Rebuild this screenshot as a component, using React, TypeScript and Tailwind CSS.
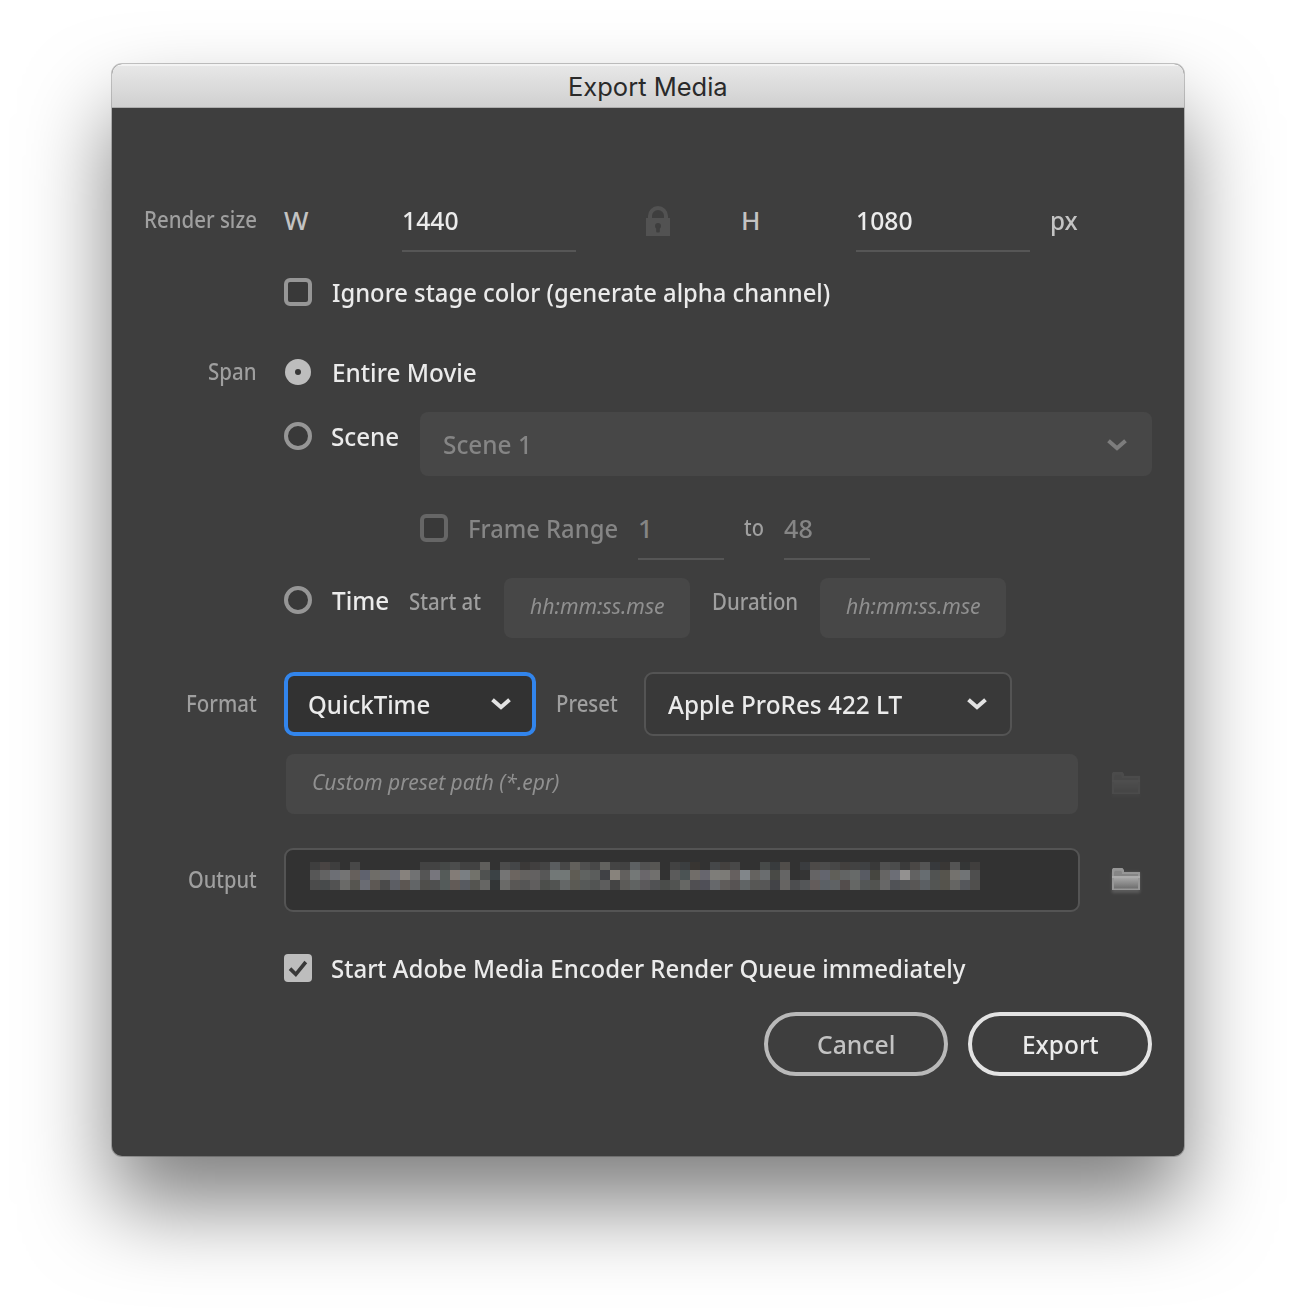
import { useLayoutEffect, useRef } from "react";
import type { ReactNode } from "react";
import clsx from "clsx";

/** One line of text, condensed or stretched horizontally to fill its box. */
function Line({ children, className }: { children: ReactNode; className: string }) {
  const box = useRef<HTMLSpanElement>(null);
  const ink = useRef<HTMLSpanElement>(null);
  useLayoutEffect(() => {
    if (!box.current || !ink.current) return;
    const ratio = box.current.clientWidth / ink.current.offsetWidth;
    ink.current.style.transform = `scaleX(${ratio})`;
  }, []);
  return (
    <span ref={box} className={clsx("block h-8 shrink-0 leading-8 whitespace-nowrap", className)}>
      <span ref={ink} className="inline-block origin-left">
        {children}
      </span>
    </span>
  );
}

const main = "text-[26px] font-medium text-[#ebebeb]";
const label = "text-[23px] font-medium text-[#9f9f9f]";
const hint = "text-[22px] italic text-[#909090]";
const unit = "text-[26px] font-medium text-[#c3c3c3]";
const muted = "text-[26px] font-medium text-[#858585]";

function Row({ className, children }: { className: string; children: ReactNode }) {
  return <div className={clsx("flex items-start", className)}>{children}</div>;
}

function LabelCell({ className, children }: { className?: string; children?: ReactNode }) {
  return <div className={clsx("flex w-[145px] shrink-0 justify-end", className)}>{children}</div>;
}

function Chevron({ className }: { className: string }) {
  return (
    <svg viewBox="0 0 20 12" fill="none" stroke="currentColor" strokeWidth="4" className={clsx("h-3 w-5 shrink-0", className)}>
      <path d="M1.5 1.7 10 9.2l8.500-7.5" />
    </svg>
  );
}

function Lock() {
  return (
    <svg viewBox="0 0 24 30" className="mt-1.5 ml-[70px] h-[30px] w-6 shrink-0">
      <path d="M4 13v-3a8 8 0 0 1 16 0v3" fill="none" stroke="#525252" strokeWidth="4" />
      <path d="M0 12h24v18H0z" fill="#525252" />
      <circle cx="12" cy="20" r="3" fill="#3e3e3e" />
      <path d="M10.200 20h3.600v5.500a1 1 0 0 1-1 1h-1.600a1 1 0 0 1-1-1z" fill="#3e3e3e" />
    </svg>
  );
}

function Folder({ id, className }: { id: string; className: string }) {
  return (
    <svg viewBox="0 0 36 36" className={clsx("h-9 w-9 shrink-0", className)}>
      <defs>
        <linearGradient id={id} x1="0" y1="0" x2="0" y2="1">
          <stop offset="0" stopColor="#a6a6a6" />
          <stop offset="1" stopColor="#6e6e6e" />
        </linearGradient>
        <filter id={id + "-glow"} x="-30%" y="-30%" width="160%" height="180%">
          <feGaussianBlur stdDeviation="1.800" />
        </filter>
      </defs>
      <path d="M4 8h28v21H4z" fill="#777" opacity=".5" filter={`url(#${id}-glow)`} />
      <path d="M4 5.500 5 4h9.500L16 6v2h16v18H4z" fill="#979797" />
      <path d="M6 8.200 7 6.800h6l1 1.400v2H6z" fill="#868686" />
      <path d="M6 10h24v2H6z" fill="#858585" />
      <path d="M4 12h28v2H4z" fill="#acacac" />
      <path d="M6 14h24v10.500H6z" fill={`url(#${id})`} />
    </svg>
  );
}

function Check({ className }: { className: string }) {
  return <div className={clsx("h-7 w-7 shrink-0 rounded-[6px] border-4 bg-[#393939]", className)} />;
}

function Radio({ className }: { className: string }) {
  return <div className={clsx("h-7 w-7 shrink-0 rounded-full border-4 border-[#969696] bg-[#393939]", className)} />;
}

const strips = [
  {
    y: 0,
    h: 8,
    cells:
      "3e3e3e 494443 3e3e3e . 484848 . . . . . . 434343 434343 454847 4c4d4d 424242 424242 5f5e5c . 4c4c4c 444648 3b3938 413f3f 444444 5a5d5f 484848 62605c 505050 484848 62625f 444444 424242 5d6062 525252 575653 . 424242 3b3e40 383532 . 454749 44413f 484848 . . 474a49 383b3d 504d4a . 3a3c3f 4d4a48 4c4c4c 474747 43403e 424242 3f4143 393939 505050 4b4c4c 3b3b3b 4a4745 545454 37393c 393735 545454 343636 403e3d",
  },
  {
    y: 8,
    h: 10,
    cells:
      "575757 636363 6d6f75 747474 66605c 5f626e 6f6d68 6e6e6e 6b6d75 87827d 717273 555555 77767d 555b59 837c77 7a7f83 72726b 4f5150 3b4245 757575 6c6560 646260 636161 575757 727877 727877 5f5c54 606361 5b5d5c 404145 88837c 62605e 747877 6a676b 71706e . 5b5b5b 4b5354 716d69 67666e 7e7d79 7c7b77 66605f 81868a 656360 6a6d6f 494a46 656565 . 343434 656465 63656e 605f59 626464 676a69 585b63 464640 666564 6c6e76 939190 626262 676d71 515352 56544d 74726e 717476 4e4e4e",
  },
  {
    y: 18,
    h: 10,
    cells:
      "4b4b4b 474a4b 525252 6a6a68 565550 6a6c73 5d5854 4a4a4a 5c5e64 5c5652 626567 4f4e4b 4e4f4f 545b5a 625b57 575a60 545450 666664 323536 6a6a68 595755 555555 605e5e 4c4e4b 515351 646767 5b5a54 565958 525453 5d5d5d 444444 5c5b58 606362 5b595b 505153 4a4c4a 515351 666764 504f52 4f4f57 66686b 5f5c5a 575353 606465 575755 565656 424347 666462 4c4d4f 545658 635c5b 5b6065 5f6264 534d4c 656765 535656 525350 676767 505256 545556 585655 5b5f63 535553 55534c 656563 55575b 504f4d",
  },
];

/** Pixelated, unreadable file path. */
function RedactedPath() {
  return (
    <svg viewBox="0 0 670 28" shapeRendering="crispEdges" className="h-7 w-[670px]">
      {strips.map(({ y, h, cells }) =>
        cells
          .split(" ")
          .map((c, i) => (c === "." ? null : <rect key={`${y}-${i}`} x={i * 10} y={y} width="10" height={h} fill={`#${c}`} />)),
      )}
    </svg>
  );
}

export default function App() {
  return (
    <main className="h-[1316px] w-[1296px] overflow-hidden bg-white px-28 pt-16 font-['Noto_Sans',sans-serif]">
      <section className="h-[1092px] w-[1072px] overflow-hidden rounded-[10px] bg-[#3e3e3e] shadow-[0_0_0_1px_rgba(0,0,0,0.22),0_49px_86px_rgba(0,0,0,0.5)]">
        <header className="flex h-11 justify-center border-t-2 border-b border-t-[#f3f3f3] border-b-[#adadad] bg-linear-to-b from-[#e7e7e7] to-[#d0d0d0] pt-[5px]">
          <Line className="w-[160px] font-['Inter',sans-serif] text-[25.500px] text-[#2a2a2a]">Export Media</Line>
        </header>

        <div className="pt-[92px]">
          <Row className="h-[76px]">
            <LabelCell className="mt-[3px]">
              <Line className={clsx(label, "w-[113px]")}>Render size</Line>
            </LabelCell>
            <Line className={clsx(unit, "mt-1 ml-[27px] w-6")}>W</Line>
            <div className="ml-[94px] h-[52px] w-[174px] shrink-0 border-b-2 border-[#565656] pt-1">
              <Line className={clsx(main, "w-[57px]")}>1440</Line>
            </div>
            <Lock />
            <Line className={clsx(unit, "mt-1 ml-[71px] w-[19px]")}>H</Line>
            <div className="ml-24 h-[52px] w-[174px] shrink-0 border-b-2 border-[#565656] pt-1">
              <Line className={clsx(main, "w-[57px]")}>1080</Line>
            </div>
            <Line className={clsx(unit, "mt-1 ml-5 w-7")}>px</Line>
          </Row>

          <Row className="h-[79px]">
            <LabelCell />
            <Check className="mt-0.5 ml-[27px] border-[#969696]" />
            <Line className={clsx(main, "ml-5 w-[498px]")}>Ignore stage color (generate alpha channel)</Line>
          </Row>

          <Row className="h-[57px]">
            <LabelCell>
              <Line className={clsx(label, "w-[49px]")}>Span</Line>
            </LabelCell>
            <div className="mt-1 ml-7 flex h-[26px] w-[26px] shrink-0 items-center justify-center rounded-full bg-[#bdbdbd]">
              <span className="h-1.5 w-1.5 rounded-full bg-[#383838]" />
            </div>
            <Line className={clsx(main, "mt-px ml-[21px] w-[145px]")}>Entire Movie</Line>
          </Row>

          <Row className="h-24">
            <LabelCell />
            <Radio className="mt-2.5 ml-[27px]" />
            <Line className={clsx(main, "mt-2 ml-[19px] w-[68px]")}>Scene</Line>
            <div className="ml-[21px] flex h-16 w-[732px] shrink-0 items-start justify-between rounded-lg bg-[#474747] pr-[25px] pl-[23px]">
              <Line className={clsx(muted, "mt-4 w-[89px]")}>Scene 1</Line>
              <Chevron className="mt-[27px] text-[#7d7d7d]" />
            </div>
          </Row>

          <Row className="h-[70px]">
            <LabelCell />
            <Check className="mt-1.5 ml-[163px] border-[#666666]" />
            <Line className={clsx(muted, "mt-1 ml-5 w-[150px]")}>Frame Range</Line>
            <div className="ml-5 h-[52px] w-[86px] shrink-0 border-b-2 border-[#565656] pt-1">
              <Line className={clsx(muted, "w-[15px]")}>1</Line>
            </div>
            <Line className={clsx(label, "mt-[3px] ml-5 w-5")}>to</Line>
            <div className="ml-5 h-[52px] w-[86px] shrink-0 border-b-2 border-[#565656] pt-1">
              <Line className={clsx(muted, "w-[29px]")}>48</Line>
            </div>
          </Row>

          <Row className="h-[94px]">
            <LabelCell />
            <Radio className="mt-2 ml-[27px]" />
            <Line className={clsx(main, "mt-1.5 ml-5 w-[57px]")}>Time</Line>
            <Line className={clsx(label, "mt-[7px] ml-5 w-[72px]")}>Start at</Line>
            <div className="ml-[23px] h-[60px] w-[186px] shrink-0 rounded-lg bg-[#474747] pt-[11px] pl-[26px]">
              <Line className={clsx(hint, "w-[135px]")}>hh:mm:ss.mse</Line>
            </div>
            <Line className={clsx(label, "mt-[7px] ml-[22px] w-[86px]")}>Duration</Line>
            <div className="ml-[22px] h-[60px] w-[186px] shrink-0 rounded-lg bg-[#474747] pt-[11px] pl-[26px]">
              <Line className={clsx(hint, "w-[135px]")}>hh:mm:ss.mse</Line>
            </div>
          </Row>

          <Row className="h-[82px]">
            <LabelCell className="mt-[15px]">
              <Line className={clsx(label, "w-[71px]")}>Format</Line>
            </LabelCell>
            <div className="ml-[27px] flex h-16 w-[252px] shrink-0 items-start justify-between rounded-[10px] border-4 border-[#3285ec] bg-[#323232] pr-[21px] pl-5">
              <Line className={clsx(main, "mt-3 w-[122px]")}>QuickTime</Line>
              <Chevron className="mt-[22px] text-[#e3e3e3]" />
            </div>
            <Line className={clsx(label, "mt-[15px] ml-5 w-[62px]")}>Preset</Line>
            <div className="ml-[26px] flex h-16 w-[368px] shrink-0 items-start justify-between rounded-[9px] border-2 border-[#545454] bg-[#393939] pr-[23px] pl-[22px]">
              <Line className={clsx(main, "mt-3.5 w-[234px]")}>Apple ProRes 422 LT</Line>
              <Chevron className="mt-6 text-[#e3e3e3]" />
            </div>
          </Row>

          <Row className="h-[94px]">
            <LabelCell />
            <div className="ml-[29px] h-[60px] w-[792px] shrink-0 rounded-lg bg-[#474747] pt-[11px] pl-[26px]">
              <Line className={clsx(hint, "w-[247px]")}>Custom preset path (*.epr)</Line>
            </div>
            <Folder id="folder-off" className="mt-3.5 ml-[30px] opacity-15" />
          </Row>

          <Row className="h-[106px]">
            <LabelCell className="mt-[15px]">
              <Line className={clsx(label, "w-[69px]")}>Output</Line>
            </LabelCell>
            <div className="ml-[27px] h-16 w-[796px] shrink-0 rounded-[9px] border-2 border-[#545454] bg-[#323232] pt-3 pl-6">
              <RedactedPath />
            </div>
            <Folder id="folder-on" className="mt-4 ml-7" />
          </Row>

          <Row className="h-[58px]">
            <LabelCell />
            <div className="ml-[27px] h-7 w-7 shrink-0 rounded-[4px] bg-[#bdbdbd]">
              <svg viewBox="0 0 28 28" fill="none" stroke="#393939" strokeWidth="3.600" className="h-7 w-7">
                <path d="m6 14.600 5.800 5.700L21.800 8" />
              </svg>
            </div>
            <Line className={clsx(main, "-mt-0.5 ml-[19px] w-[634px]")}>Start Adobe Media Encoder Render Queue immediately</Line>
          </Row>

          <div className="flex justify-end gap-5 pr-8">
            <button className="flex h-16 w-[184px] items-start justify-center rounded-full border-4 border-[#b9b9b9] pt-3">
              <Line className={clsx(unit, "w-[78px] text-left")}>Cancel</Line>
            </button>
            <button className="flex h-16 w-[184px] items-start justify-center rounded-full border-4 border-[#e3e3e3] pt-3">
              <Line className={clsx(main, "w-[77px] text-left")}>Export</Line>
            </button>
          </div>
        </div>
      </section>
    </main>
  );
}
